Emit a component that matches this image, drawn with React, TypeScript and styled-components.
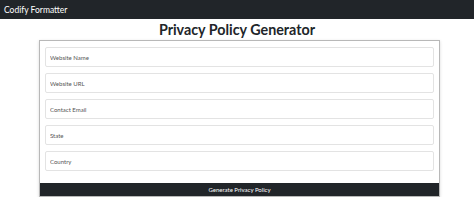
import React from "react";
import styled, { createGlobalStyle } from "styled-components";

const GlobalStyle = createGlobalStyle`
  html, body {
    margin: 0;
    padding: 0;
    background: #ffffff;
    font-family: Lato, "Liberation Sans", sans-serif;
  }
`;

const fields = ["Website Name", "Website URL", "Contact Email", "State", "Country"];

const App: React.FC = () => {
  return (
    <>
      <GlobalStyle />
      <Navbar>
        <Brand>Codify Formatter</Brand>
      </Navbar>
      <Title>Privacy Policy Generator</Title>
      <Card>
        <Fields>
          {fields.map((f) => (
            <Input key={f} placeholder={f} />
          ))}
        </Fields>
        <Button type="button">Generate Privacy Policy</Button>
      </Card>
    </>
  );
};

export default App;

const Navbar = styled.nav`
  height: 19px;
  background-color: #212529;
  display: flex;
  align-items: center;
  padding-left: 4px;
`;

const Brand = styled.span`
  color: #ffffff;
  font-size: 8.5px;
`;

const Title = styled.h1`
  margin: 0;
  height: 21px;
  line-height: 22px;
  text-align: center;
  font-size: 14.3px;
  font-weight: 700;
  color: #212529;
`;

const Card = styled.form`
  width: 399px;
  margin-left: 39px;
  border: 1px solid #b8b8b8;
  box-shadow: 0 1px 3px rgba(0, 0, 0, 0.15);
  display: flex;
  flex-direction: column;
`;

const Fields = styled.div`
  display: flex;
  flex-direction: column;
  gap: 6px;
  padding: 6px 5px 12px 5px;
`;

const Input = styled.input`
  height: 20px;
  box-sizing: border-box;
  border: 1px solid #e3e3e3;
  border-radius: 2px;
  padding: 0 4px;
  font-family: Lato, "Liberation Sans", sans-serif;
  font-size: 6px;
  outline: none;

  &::placeholder {
    color: #555555;
  }
`;

const Button = styled.button`
  height: 13px;
  border: none;
  background-color: #212529;
  color: #ffffff;
  font-family: Lato, "Liberation Sans", sans-serif;
  font-size: 6px;
  padding: 0;
  cursor: pointer;
`;
